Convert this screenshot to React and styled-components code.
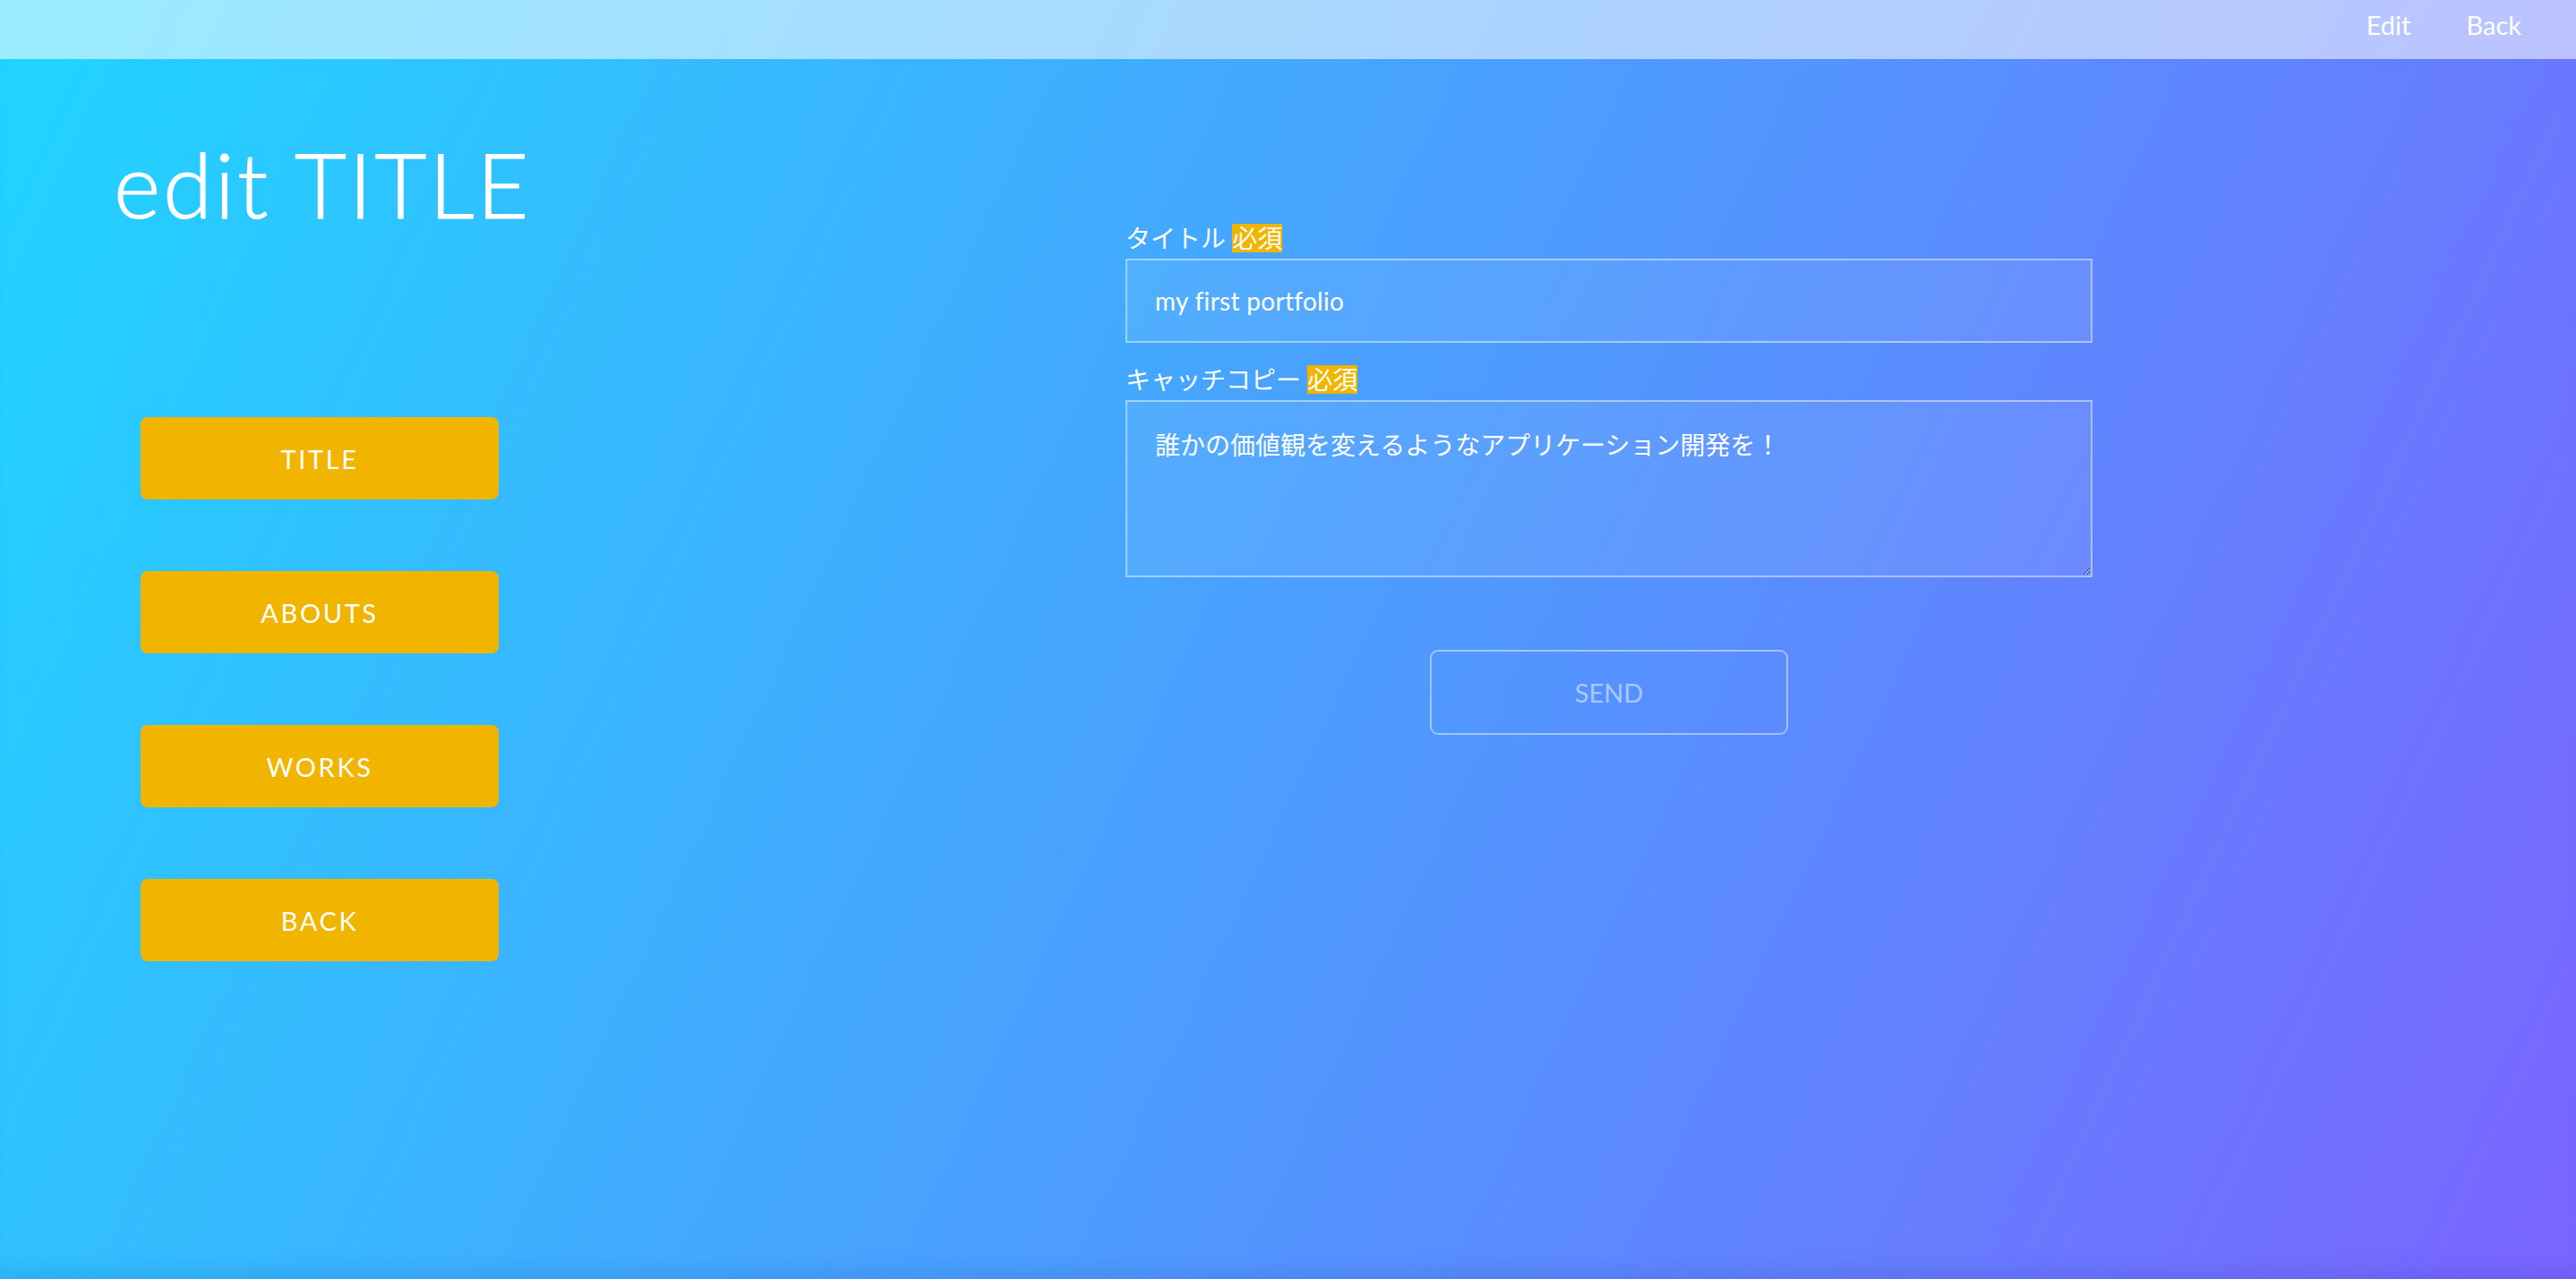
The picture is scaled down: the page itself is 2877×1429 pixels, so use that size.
import React from "react";
import styled, { createGlobalStyle } from "styled-components";

const GlobalStyle = createGlobalStyle`
    html, body {
        margin: 0;
        padding: 0;
    }
    body {
        font-family: "Lato", "Noto Sans CJK JP", sans-serif;
        color: #fff;
    }
    * {
        box-sizing: border-box;
    }
`

const Page = styled.div`
    min-height: 100vh;
    background: linear-gradient(115deg, #20d5ff 0%, #4b9eff 50%, #7a64ff 100%);
    box-shadow: inset 0 -22px 22px -14px rgba(0, 40, 120, 0.12);
`

const Header = styled.header`
    height: 66px;
    background: rgba(255, 255, 255, 0.55);
    display: flex;
    justify-content: flex-end;
    align-items: flex-start;
    gap: 62px;
    padding: 11px 61px 0 0;
`

const HeaderLink = styled.a`
    font-size: 29px;
    line-height: 1.2;
    color: #fff;
    text-decoration: none;
    cursor: pointer;
`

const Main = styled.main`
    display: grid;
    grid-template-columns: 1257px 1080px;
`

const Side = styled.section`
    padding: 79px 0 0 127px;
`

const PageTitle = styled.h1`
    margin: 0;
    font-size: 100px;
    font-weight: 300;
    line-height: 1.2;
    letter-spacing: 2.8px;
    -webkit-text-stroke: 1.2px #fff;
`

const Nav = styled.nav`
    display: flex;
    flex-direction: column;
    gap: 80px;
    margin: 201px 0 0 30px;
`

const NavButton = styled.button`
    width: 400px;
    height: 92px;
    border: none;
    border-radius: 8px;
    background: #f1b500;
    color: #fff;
    font-family: "Lato", sans-serif;
    font-size: 29px;
    letter-spacing: 2.6px;
    text-transform: uppercase;
    cursor: pointer;
`

const Form = styled.form`
    padding-top: 184px;
    display: flex;
    flex-direction: column;
`

const Label = styled.label`
    display: block;
    font-size: 28px;
    line-height: 32px;
    margin: ${p => (p.$first ? "0" : "25px")} 0 7px;
`

const Required = styled.span`
    display: inline-block;
    background: #f1b500;
    line-height: 32px;
`

const TextInput = styled.input`
    height: 94px;
    width: 100%;
    padding: 0 31px;
    border: 2px solid rgba(255, 255, 255, 0.45);
    background: rgba(255, 255, 255, 0.07);
    color: #fff;
    font-family: "Lato", "Noto Sans CJK JP", sans-serif;
    font-size: 28px;
    letter-spacing: 0.3px;
    outline: none;
`

const TextArea = styled.textarea`
    height: 198px;
    width: 100%;
    padding: 27px 31px;
    border: 2px solid rgba(255, 255, 255, 0.45);
    background: rgba(255, 255, 255, 0.07);
    color: #fff;
    font-family: "Lato", "Noto Sans CJK JP", sans-serif;
    font-size: 28px;
    line-height: 42px;
    outline: none;
`

const SendButton = styled.button`
    align-self: center;
    margin-top: 81px;
    width: 400px;
    height: 95px;
    border: 2px solid rgba(255, 255, 255, 0.45);
    border-radius: 9px;
    background: transparent;
    color: rgba(255, 255, 255, 0.5);
    font-family: "Lato", sans-serif;
    font-size: 29px;
    cursor: pointer;
`

const navItems = ["title", "abouts", "works", "back"];

export default function App() {
    return (
        <Page>
            <GlobalStyle />
            <Header>
                <HeaderLink>Edit</HeaderLink>
                <HeaderLink>Back</HeaderLink>
            </Header>
            <Main>
                <Side>
                    <PageTitle>edit TITLE</PageTitle>
                    <Nav>
                        {navItems.map(item => (
                            <NavButton key={item}>{item}</NavButton>
                        ))}
                    </Nav>
                </Side>
                <Form onSubmit={e => e.preventDefault()}>
                    <Label $first>
                        タイトル <Required>必須</Required>
                    </Label>
                    <TextInput defaultValue="my first portfolio" />
                    <Label>
                        キャッチコピー <Required>必須</Required>
                    </Label>
                    <TextArea defaultValue="誰かの価値観を変えるようなアプリケーション開発を！" />
                    <SendButton type="submit">SEND</SendButton>
                </Form>
            </Main>
        </Page>
    );
}
